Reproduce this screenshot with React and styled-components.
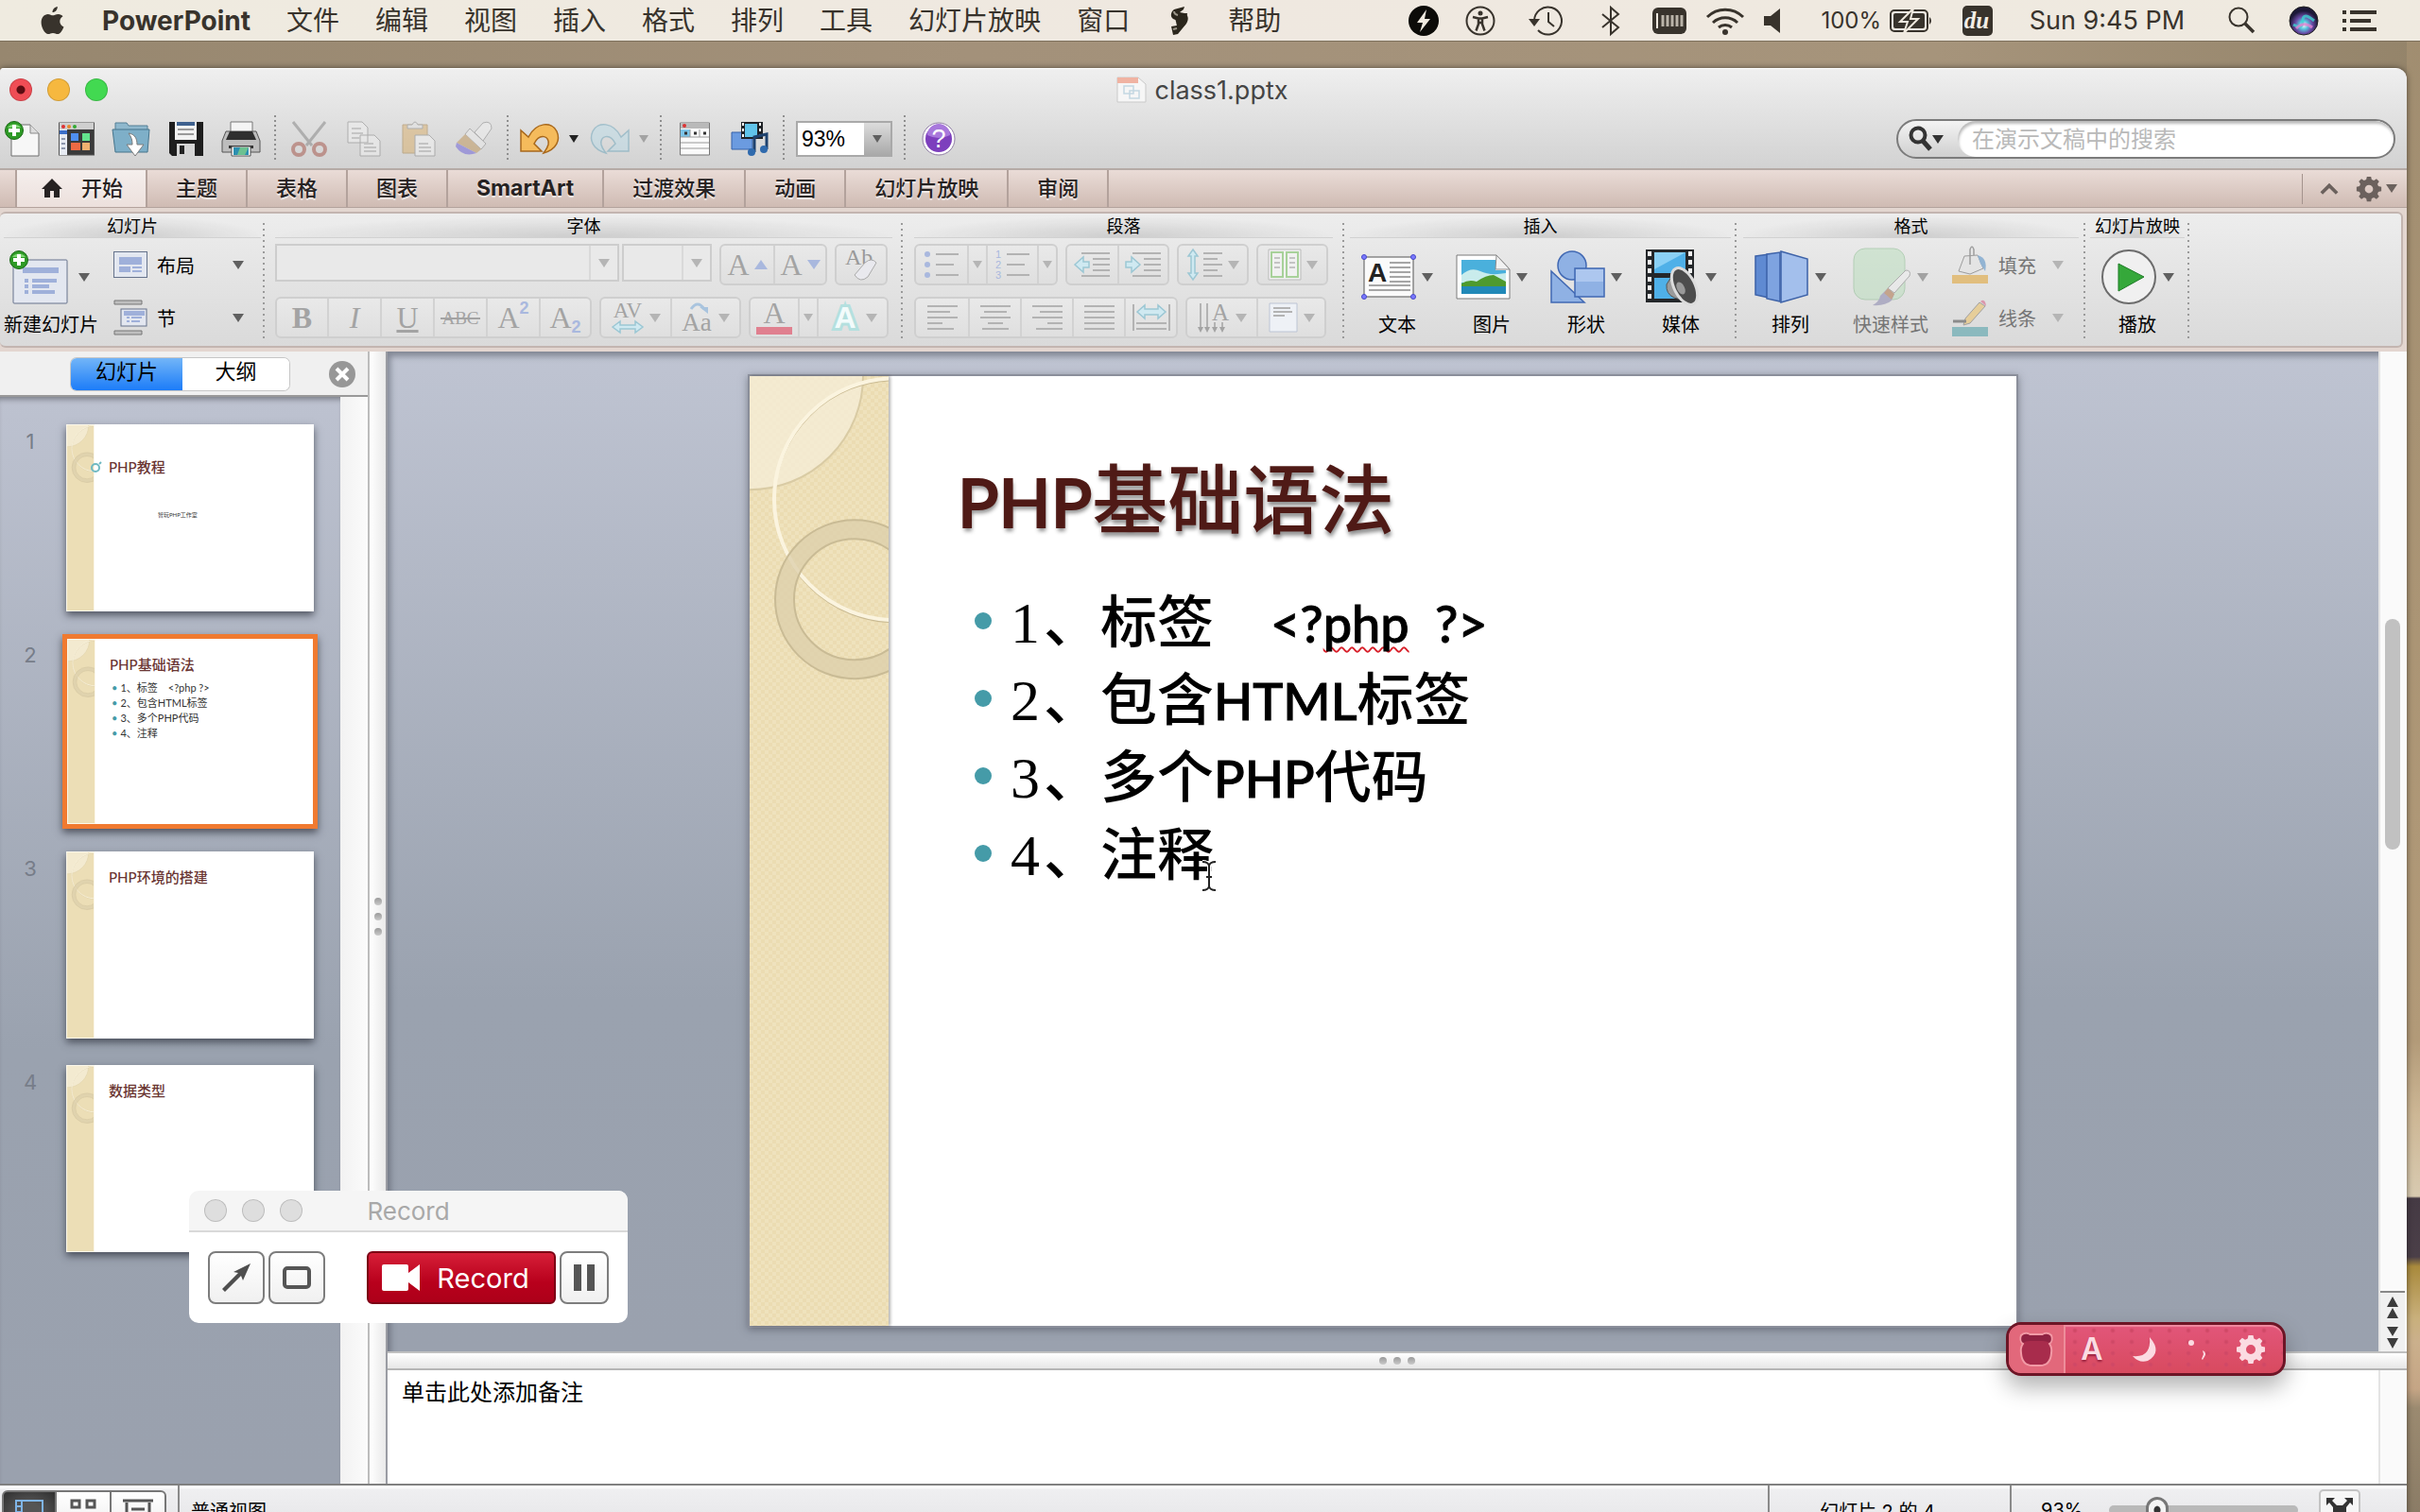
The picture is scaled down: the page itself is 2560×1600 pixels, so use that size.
import React from "react";
import styled, { createGlobalStyle, css } from "styled-components";

const GlobalStyle = createGlobalStyle`
  * {
    box-sizing: border-box;
  }
  body {
    margin: 0;
    font-family: Inter, "Noto Sans CJK SC", sans-serif;
    color: #000;
  }
  button, input, select, textarea {
    font: inherit;
    color: inherit;
    margin: 0;
    padding: 0;
    border: 0;
    background: none;
  }
  svg {
    display: block;
    flex: none;
    overflow: visible;
  }
`

const Desktop = styled.div`
  height: 100vh;
  overflow: hidden;
  position: relative;
  background:
    linear-gradient(#a08d70 0, #b29a78 1100px, #cdb795 1180px, #d8cab0 1266px, #453a44 1268px, #4b3f48 1330px, #a98a3c 1340px, #c9b07c 1395px, #cbb08c 1420px, #c5a585 1470px, #9b8a70 1490px, #8b7c66 1600px) right / 14px 100% no-repeat,
    linear-gradient(90deg, #97876f, #a3917a 40%, #a6947b 80%, #94846a);
`

/* menu bar */

const MenuBar = styled.header`
  height: 44px;
  display: flex;
  align-items: center;
  justify-content: space-between;
  padding: 0 18px 0 42px;
  background: linear-gradient(90deg, #efebe0, #efe8e0 50%, #efeae0);
  border-bottom: 1px solid #7d705c;
  color: #38332c;
  font-size: 27px;
`

const Menus = styled.nav`
  display: flex;
  align-items: center;
  gap: 38px;
`

const MenuButton = styled.button`
  font-size: 28px;
  font-weight: ${props => (props.$app ? 700 : 400)};
  line-height: 40px;
  white-space: nowrap;
`

const Extras = styled.div`
  display: flex;
  align-items: center;
`

const Extra = styled.div`
  width: ${props => props.$w}px;
  display: flex;
  align-items: center;
  justify-content: ${props => (props.$end ? "flex-end" : "center")};
  padding-right: ${props => (props.$end ? 8 : 0)}px;
  font-size: ${props => (props.$end ? 24 : 27)}px;
  white-space: nowrap;
`

/* window */

const Window = styled.main`
  height: calc(100vh - 48px);
  margin: 28px 14px 0 0;
  display: flex;
  flex-direction: column;
  border-radius: 4px 12px 0 0;
  overflow: hidden;
  background: #e3d6d0;
  box-shadow: 0 0 6px rgba(0, 0, 0, 0.5);
`

const Chrome = styled.div`
  height: 108px;
  background: linear-gradient(#efefef, #d2d2d2);
  border-top: 1px solid #fff;
  border-bottom: 2px solid #b5aaa6;
`

const TitleBar = styled.div`
  height: 44px;
  display: grid;
  grid-template-columns: 1fr auto 1fr;
  align-items: center;
  padding: 0 12px 0 10px;
`

const Lights = styled.div`
  display: flex;
  gap: 16px;
`

const Light = styled.button`
  width: 24px;
  height: 24px;
  border-radius: 50%;
  border: 1px solid rgba(0, 0, 0, 0.15);
  background: ${props => props.$c};
`

const FileName = styled.h1`
  margin: 0;
  display: flex;
  align-items: center;
  gap: 8px;
  font-size: 27px;
  font-weight: 400;
  color: #454545;
`

const ToolBar = styled.div`
  height: 60px;
  display: flex;
  align-items: center;
  gap: 12px;
`

const Tool = styled.button`
  width: ${props => (props.$menu ? 62 : 46)}px;
  height: 48px;
  display: flex;
  align-items: center;
  justify-content: ${props => (props.$menu ? "space-between" : "center")};
  opacity: ${props => (props.disabled ? 0.45 : 1)};
`

const Rule = styled.span`
  width: 2px;
  height: 50px;
  background: repeating-linear-gradient(#8f8f8f 0 2px, transparent 2px 5px);
`

const Caret = styled.span`
  flex: none;
  border: ${props => (props.$small ? 5 : 6)}px solid transparent;
  border-top: ${props => (props.$small ? 8 : 9)}px solid ${props => props.$c || "#606060"};
  border-bottom: 0;
`

const Zoom = styled.label`
  width: 102px;
  height: 38px;
  display: flex;
  border: 2px solid #a9a9a9;
  background: #fff;
  font-family: "Liberation Sans", sans-serif;
  font-size: 23px;

  select {
    appearance: none;
    flex: 1;
    min-width: 0;
    padding-left: 4px;
  }
`

const ZoomArrow = styled.span`
  width: 28px;
  display: flex;
  align-items: center;
  justify-content: center;
  background: linear-gradient(#dcdcdc, #a9a9a9);
`

const Search = styled.label`
  margin: 0 12px 0 auto;
  width: 528px;
  height: 42px;
  display: flex;
  align-items: center;
  border: 2px solid #7b7b7b;
  border-radius: 21px;
  background: linear-gradient(#f4f4f4, #cfcfcf);
  overflow: hidden;

  input {
    flex: 1;
    height: 38px;
    padding-left: 15px;
    border-radius: 19px;
    background: #fff;
    box-shadow: inset 1px 3px 3px #bbb;
    font-size: 24px;
  }
  input::placeholder {
    color: #b9b9b9;
  }
`

const SearchGlass = styled.span`
  width: 63px;
  padding-right: 6px;
  display: flex;
  align-items: center;
  justify-content: center;
`

/* tabs */

const Tabs = styled.nav`
  height: 40px;
  display: flex;
  padding-left: 16px;
  background: linear-gradient(#eadcd7, #cfbbb3);
  border-bottom: 1px solid #b3a29c;
`

const Tab = styled.button`
  height: 39px;
  padding: 0 30px 2px;
  display: flex;
  align-items: center;
  gap: 20px;
  border-right: 2px solid #b3a29c;
  font-size: ${props => (props.$bold ? 23 : 22)}px;
  font-weight: ${props => (props.$bold ? 700 : 500)};
  line-height: 34px;
  color: #262222;
  text-shadow: 0 2px 1px rgba(255, 255, 255, 0.7);
  white-space: nowrap;
  ${props => props.$on && css`
    padding: 0 24px 2px 26px;
    border-left: 2px solid #b3a29c;
    background: linear-gradient(#f5efed, #ece0dc);
  `}
`

const TabTools = styled.div`
  margin-left: auto;
  display: flex;
  align-items: center;
  gap: 18px;
  padding-right: 10px;

  &::before {
    content: "";
    width: 1px;
    height: 32px;
    background: #a4938d;
  }
`

const GearMenu = styled.button`
  display: flex;
  align-items: center;
  gap: 4px;
`

/* ribbon */

const Ribbon = styled.section`
  height: 144px;
  margin: 4px 4px 4px 0;
  display: flex;
  border: 2px solid #c3b5b0;
  border-left: 0;
  border-radius: 6px;
  background: linear-gradient(#ededed, #dadada);
`

const Group = styled.section`
  width: ${props => props.$w}px;
  padding: 0 ${props => props.$pad}px;
  display: flex;
  flex-direction: column;
  background: repeating-linear-gradient(#9a9a9a 0 2px, transparent 2px 6px) right 10px / 2px 126px no-repeat;
`

const GroupName = styled.h2`
  margin: 0;
  height: 26px;
  font-size: 18px;
  font-weight: 400;
  line-height: 28px;
  text-align: center;
  white-space: nowrap;
  background: radial-gradient(ellipse 50% 90% at 50% 100%, rgba(0, 0, 0, 0.12), transparent);
  border-bottom: 1px solid rgba(0, 0, 0, 0.1);
`

const GroupBody = styled.div`
  flex: 1;
  padding-top: 6px;
  display: flex;
  flex-direction: ${props => (props.$rows ? "column" : "row")};
  gap: ${props => (props.$rows ? 12 : 0)}px;
`

const Row = styled.div`
  display: flex;
  gap: ${props => props.$gap || 8}px;
`

const Cluster = styled.div`
  display: flex;
  height: 44px;
  border: 2px solid #cfcfcf;
  border-radius: 6px;
  background: linear-gradient(#e9e9e9, #dfdfdf);
`

const Cell = styled.button`
  width: ${props => props.$w}px;
  display: flex;
  align-items: center;
  justify-content: center;
  gap: 5px;
  font-family: "Liberation Serif", serif;
  font-size: 32px;
  line-height: 38px;
  color: #a3a3a3;

  & + & {
    border-left: 2px solid #d2d2d2;
  }
  sup, sub {
    font: 700 18px/20px "Liberation Sans", sans-serif;
    color: #a9b8de;
    margin-left: -5px;
  }
  sup { align-self: flex-start; }
  sub { align-self: flex-end; }
`

const Combo = styled.label`
  width: ${props => props.$w}px;
  height: 40px;
  display: flex;
  align-items: center;
  border: 2px solid #cdcdcd;
  background: #e9e9e9;

  select {
    appearance: none;
    flex: 1;
    min-width: 0;
    height: 36px;
    border-right: 2px solid #d2d2d2;
  }
  ${Caret} {
    margin: 0 8px;
  }
`

const BigButton = styled.button`
  width: ${props => props.$w || 100}px;
  height: 104px;
  font-size: 20px;
  line-height: 34px;
  white-space: nowrap;
  color: ${props => (props.disabled ? "#757575" : "#000")};
`

const BigIcon = styled.span`
  height: 68px;
  display: flex;
  align-items: center;
  justify-content: center;
  gap: 6px;
  opacity: ${props => (props.$faded ? 0.5 : 1)};
`

const SmallStack = styled.div`
  flex: 1;
  display: flex;
  flex-direction: column;
  gap: 12px;
  padding: 0 ${props => props.$right}px 0 ${props => props.$left}px;
`

const SmallButton = styled.button`
  height: 44px;
  width: 100%;
  display: flex;
  align-items: center;
  gap: 10px;
  font-size: 20px;
  color: ${props => (props.disabled ? "#757575" : "#000")};

  svg {
    opacity: ${props => (props.disabled ? 0.6 : 1)};
  }
  ${Caret} {
    margin-left: auto;
  }
`

/* body */

const Body = styled.div`
  flex: 1;
  min-height: 0;
  display: flex;
`

const SidePanel = styled.aside`
  width: 391px;
  display: flex;
  flex-direction: column;
  border-right: 2px solid #bcbcbc;
`

const SideHead = styled.div`
  height: 48px;
  padding: 2px 13px 0 75px;
  display: flex;
  align-items: center;
  justify-content: space-between;
  background: #f0f0f0;
  border-bottom: 2px solid #999;
`

const Segments = styled.div`
  display: flex;
  height: 34px;
  border-radius: 6px;
  overflow: hidden;
  background: #fff;
  box-shadow: 0 0 0 1px #c6c6c6;
`

const Segment = styled.button`
  width: ${props => (props.$on ? 118 : 113)}px;
  padding-bottom: 6px;
  font-size: 22px;
  line-height: 26px;
  background: ${props => (props.$on ? "linear-gradient(#72b5f8, #1c7cf8)" : "#fff")};
`

const SideBody = styled.div`
  flex: 1;
  min-height: 0;
  display: flex;
  background: #fafafa;
`

const Thumbs = styled.ol`
  flex: 1;
  margin: 0;
  padding: 29px 0 0 24px;
  list-style: none;
  background: linear-gradient(#bdc2d0, #9aa2af 60%, #9aa1ae);
  box-shadow: inset 0 6px 6px -4px rgba(0, 0, 0, 0.4);
`

const ThumbItem = styled.li`
  height: 226px;
  display: flex;
  gap: 26px;
  font-size: 22px;
  line-height: 36px;
  color: #777d89;
`

const Number = styled.span`
  width: 16px;
  text-align: center;
`

const Thumb = styled.div`
  width: 270px;
  height: 206px;
  margin-top: -4px;
  display: flex;
  padding: ${props => (props.$on ? 5 : 4)}px;
  ${props => props.$on && css`
    background: #f07a30;
    box-shadow: 0 4px 8px rgba(40, 44, 56, 0.7);
  `}
`

const Paper = styled.div`
  flex: 1;
  display: flex;
  background: #fff;
  box-shadow: ${props => (props.$on ? "none" : "0 4px 8px rgba(40, 44, 56, 0.7)")};
`

const ThumbBand = styled.div`
  width: 30px;
  height: 100%;
  margin-right: 15px;
  border: 1px solid #fbf7ea;
  background: #ecdeb6;
  overflow: hidden;
`

const ThumbText = styled.div`
  padding-top: ${props => (props.$low ? 34 : 16)}px;
  font: 11px/16px Lato, "Noto Sans CJK SC", sans-serif;
  color: #333;

  h3 {
    margin: 0 0 6px;
    font-size: 15px;
    line-height: 22px;
    font-weight: 500;
    color: #6a3532;
    white-space: nowrap;
  }
  h3 svg {
    display: inline;
    margin: 0 7px 0 -19px;
  }
  ul {
    margin: 0;
    padding: 0 0 0 10px;
    list-style: none;
    white-space: pre;
  }
  li::before {
    content: "•";
    margin-left: -8px;
    padding-right: 3px;
    color: #459ba8;
  }
  p {
    margin: 32px 0 0 52px;
    font-size: 6px;
    white-space: nowrap;
  }
`

const SideScroll = styled.div`
  width: 29px;
  background: linear-gradient(90deg, #f2f2f2, #fbfbfb);
`

const VSplit = styled.div`
  width: 19px;
  display: flex;
  flex-direction: column;
  align-items: center;
  gap: 8px;
  padding-top: 578px;
  background: linear-gradient(90deg, #fff, #e9e9e9);
  border-right: 2px solid #9a9ca3;
`

const HSplit = styled.div`
  height: 20px;
  display: flex;
  align-items: center;
  justify-content: center;
  gap: 7px;
  background: linear-gradient(#fff, #e6e6e6);
  border-top: 2px solid #c0c0c0;
  border-bottom: 2px solid #b5b5b5;
`

const Dot = styled.i`
  width: 8px;
  height: 8px;
  border-radius: 50%;
  background: linear-gradient(#9a9a9a, #cacaca);
`

const Editor = styled.div`
  flex: 1;
  display: flex;
  flex-direction: column;
`

const Stage = styled.div`
  flex: 1;
  min-height: 0;
  display: flex;
`

const Canvas = styled.div`
  flex: 1;
  padding: 26px 0 27px;
  display: flex;
  justify-content: center;
  background: linear-gradient(#bfc4d2, #9aa2af 65%, #9aa1ae);
  box-shadow: inset 6px 8px 6px -3px rgba(70, 76, 88, 0.5);
`

const Slide = styled.article`
  height: 100%;
  aspect-ratio: 4 / 3;
  display: flex;
  background: #fff;
  box-shadow: 0 0 0 2px #8b8f9b, 0 2px 8px 2px rgba(60, 64, 76, 0.5);
`

const Band = styled.div`
  width: 147px;
  background: repeating-conic-gradient(#efe2bd 0 25%, #ebdcb2 0 50%) 0 0 / 8px 8px;
  box-shadow: 2px 0 3px rgba(0, 0, 0, 0.3);
  overflow: hidden;
`

const SlideText = styled.div`
  padding: 89px 0 0 73px;
  font-family: Lato, "Noto Sans CJK SC", sans-serif;
  font-size: 60px;
  font-weight: 500;
`

const SlideTitle = styled.h2`
  margin: 0 0 46px;
  font-size: 80px;
  line-height: 80px;
  font-weight: 500;
  color: #4f1a16;
  text-shadow: 1px 4px 4px rgba(0, 0, 0, 0.45);

  span {
    font-size: 72px;
    -webkit-text-stroke: 2px #4f1a16;
  }
`

const Points = styled.ul`
  margin: 0;
  padding: 0 0 0 18px;
  list-style: none;

  li {
    display: flex;
    align-items: baseline;
    height: 82px;
    line-height: 82px;
    white-space: pre;
  }
  li::before {
    content: "";
    align-self: center;
    width: 18px;
    height: 18px;
    margin-right: 20px;
    border-radius: 50%;
    background: #459ba8;
  }
  b {
    font-size: 54px;
    font-weight: 500;
    -webkit-text-stroke: 1px #000;
  }
  u {
    text-decoration: underline wavy #d8202a 2px;
    text-underline-offset: 4px;
    text-decoration-skip-ink: none;
  }
`

const Digit = styled.span`
  width: 35px;
  font-family: "Liberation Serif", serif;
  font-size: 62px;
`

const VScroll = styled.div`
  width: 30px;
  padding-right: 2px;
  display: flex;
  flex-direction: column;
  align-items: center;
  background: #fafafa;
  border-left: 2px solid #e4e4e4;
`

const ScrollThumb = styled.div`
  width: 16px;
  height: 244px;
  margin-top: 283px;
  border-radius: 8px;
  background: #c1c1c1;
`

const Pager = styled.div`
  width: 100%;
  margin-top: auto;
  display: flex;
  flex-direction: column;
  align-items: center;
  background: #f0f0f0;
  border-top: 2px solid #888;

  button {
    height: 31px;
    display: flex;
  }
`

const Notes = styled.div`
  height: 120px;
  display: flex;
  background: #fff;

  textarea {
    flex: 1;
    resize: none;
    padding: 8px 15px;
    font-size: 24px;
    line-height: 32px;
  }
  textarea::placeholder {
    color: #000;
  }
`

/* status bar */

const StatusBar = styled.footer`
  height: 54px;
  display: flex;
  border-top: 2px solid #808080;
  background: linear-gradient(#fff 0 2px, #efeff1 4px, #e4e4e6);
  font-size: 20px;
`

const Views = styled.div`
  width: 190px;
  padding: 5px 0 0 2px;
  display: flex;
  border-right: 2px solid #8a8a8a;
`

const ViewButton = styled.button`
  width: 58px;
  height: 44px;
  display: flex;
  align-items: center;
  justify-content: center;
  border: 2px solid #777;
  border-left-width: ${props => (props.$on ? 2 : 0)}px;
  border-radius: ${props => (props.$on ? "6px 0 0 6px" : props.$last ? "0 6px 6px 0" : "0")};
  background: ${props => (props.$on ? "radial-gradient(#555 30%, #2f2f2f)" : "linear-gradient(#fff, #eee)")};
`

const StatusCell = styled.div`
  width: ${props => props.$w}px;
  flex: ${props => (props.$grow ? "1" : "none")};
  padding-left: ${props => props.$pad}px;
  display: flex;
  align-items: center;
  gap: 28px;
  border-right: ${props => (props.$last ? "0" : "2px solid #8a8a8a")};
  white-space: pre;
`

const Slider = styled.input`
  appearance: none;
  width: 200px;
  height: 10px;
  border-radius: 5px;
  background: #b9b9b9;

  &::-webkit-slider-thumb {
    appearance: none;
    width: 24px;
    height: 28px;
    border: 3px solid #777;
    border-radius: 12px;
    background: radial-gradient(#333 0 3px, #f4f4f4 4px);
  }
`

const FitButton = styled.button`
  width: 44px;
  height: 44px;
  margin-left: -6px;
  display: flex;
  align-items: center;
  justify-content: center;
  border: 2px solid #c4c4c4;
  border-radius: 5px;
  background: #f6f6f6;
`

/* floating windows */

const Recorder = styled.section`
  position: absolute;
  left: 200px;
  top: 1260px;
  width: 464px;
  height: 140px;
  border-radius: 10px;
  overflow: hidden;
  background: #fff;
`

const RecorderTitle = styled.div`
  height: 44px;
  padding: 0 16px;
  display: grid;
  grid-template-columns: 1fr auto 1fr;
  align-items: center;
  background: #f5f5f5;
  border-bottom: 2px solid #d9d9d9;
  font-size: 26px;
  color: #a8a8a8;
`

const RecorderBody = styled.div`
  padding: 20px;
  display: flex;
  gap: 4px;
`

const RecButton = styled.button`
  width: ${props => props.$w || 60}px;
  height: 56px;
  display: flex;
  align-items: center;
  justify-content: center;
  border: 2px solid #7d7d7d;
  border-radius: 8px;
  background: linear-gradient(#fff, #f0f0f0);
  ${props => props.$red && css`
    margin-left: 40px;
    padding-right: 12px;
    gap: 18px;
    border-color: #7c0014;
    border-radius: 6px;
    background: linear-gradient(#d61f38, #b8001c 60%, #ad0019);
    color: #fff;
    font-size: 29px;
  `}
`

const InputBar = styled.section`
  position: absolute;
  left: 2122px;
  top: 1399px;
  width: 296px;
  height: 57px;
  padding-right: 6px;
  display: flex;
  align-items: center;
  border: 3px solid #6d1526;
  border-radius: 16px;
  background: radial-gradient(circle, #cf4866 1px, transparent 3px) 0 0 / 20px 12px, linear-gradient(#e2567a, #d84a5f);
  box-shadow: inset 0 2px 1px #f18aa0, 0 12px 24px rgba(0, 0, 0, 0.3);
  overflow: hidden;
  color: #fbdbe2;

  button {
    flex: 1;
    height: 100%;
    display: flex;
    align-items: center;
    justify-content: center;
    font-size: 32px;
    font-weight: 600;
    text-shadow: 0 2px 2px #9a2440;
  }
  button:first-child {
    flex: none;
    width: 60px;
    background: #e2687b;
    border-right: 2px solid #ee8d9a;
  }
`

const TextCursor = styled.div`
  position: absolute;
  left: 1270px;
  top: 910px;
`

/* icons */

const Plus = ({ x, y }) => (
  <g transform={`translate(${x} ${y})`}>
    <circle r="9.5" fill="#2e9a26" stroke="#1b6a17" />
    <path d="M-7 -3a8 7 0 0 1 14 0z" fill="#7fd673" />
    <path d="M0-6V6M-6 0H6" stroke="#fff" strokeWidth="4" />
  </g>
)

const Lines = ({ rows, w = 36, h = 32, children }) => (
  <svg width={w} height={h} viewBox={`0 0 ${w} ${h}`} fill="none">
    {rows.map(([x1, x2], i) => (
      <path key={i} d={`M${x1} ${4 + i * 6}H${x2}`} stroke="#b3b3b3" strokeWidth="2" />
    ))}
    {children}
  </svg>
)

const Arrow = ({ d }) => <path d={d} fill="#cfe9f1" stroke="#9cc7d4" strokeWidth="1.5" />

const AppleIcon = () => (
  <svg width="28" height="32" viewBox="0 0 28 32" fill="#38332c">
    <path d="M18.8 1c.2 3-2.3 6.200-5.300 6.100C13.200 4.300 16 1.300 18.800 1zM24.500 11.200c-4.800 3-3.900 9.300 1 11.200-1.400 3.600-4 7.600-6.500 7.700-2 0-2.700-1.200-5-1.200s-3.100 1.200-5 1.200C5.300 30.100 1.500 23 1.600 17.600c.1-5.500 3.500-8.600 7-8.700 2.200 0 4 1.400 5.300 1.400s3.500-1.600 6-1.400c1.800.1 3.500.8 4.600 2.300z" />
  </svg>
)

const ScriptIcon = () => (
  <svg width="28" height="32" viewBox="0 0 28 32">
    <path d="M20 1L9 4C5 7 5 12 8 14l7 3-3 4-6 1 2 9 5-1 9-11c3-5 2-9-2-11l-5-1 4-3z" fill="#2b261c" />
    <path d="M9 8h14l-2 12-8 6z" fill="#2b261c" />
    <path d="M9 6q0 3 4 4M8 25l4-1" stroke="#9a9488" strokeWidth="2" fill="none" />
  </svg>
)

const extras = {
  bolt: (
    <svg width="32" height="32" viewBox="0 0 32 32">
      <circle cx="16" cy="16" r="16" fill="#0c0b08" />
      <path d="M19 4L9 18h6l-3 10 11-14h-6z" fill="#efe9df" />
    </svg>
  ),
  access: (
    <svg width="32" height="32" viewBox="0 0 32 32" fill="none" stroke="#38332c" strokeWidth="2">
      <circle cx="16" cy="16" r="14.500" />
      <circle cx="16" cy="8" r="2.500" fill="#38332c" stroke="none" />
      <path d="M8 12l6 1.500h4l6-1.500M14 13.500v6l-2.500 7M18 13.500v6l2.500 7M15 18h2" strokeWidth="2.500" />
    </svg>
  ),
  clock: (
    <svg width="38" height="32" viewBox="0 0 38 32" fill="none" stroke="#38332c" strokeWidth="2">
      <path d="M7 16A14.500 14.500 0 1 1 11 26" />
      <path d="M22 7v10l6 5" />
      <path d="M1 14h12l-6 8z" fill="#38332c" stroke="none" />
    </svg>
  ),
  bluetooth: (
    <svg width="22" height="32" viewBox="0 0 22 32" fill="none" stroke="#38332c" strokeWidth="2">
      <path d="M2 9l17 14-8 7V2l8 7L2 23" />
    </svg>
  ),
  memory: (
    <svg width="36" height="28" viewBox="0 0 36 28">
      <rect width="36" height="28" rx="6" fill="#38332c" />
      <path d="M5 6v16" stroke="#efe9df" strokeWidth="2" />
      <path d="M11 8v12M16 8v12M21 8v12M26 8v12M31 8v12" stroke="#b9b3a8" strokeWidth="3" />
    </svg>
  ),
  wifi: (
    <svg width="42" height="30" viewBox="0 0 42 30" fill="none" stroke="#38332c" strokeWidth="3">
      <path d="M2 11a27 27 0 0 1 38 0M8 17a19 19 0 0 1 26 0M14 22a11 11 0 0 1 14 0" />
      <circle cx="21" cy="27" r="3" fill="#38332c" stroke="none" />
    </svg>
  ),
  speaker: (
    <svg width="18" height="26" viewBox="0 0 18 26" fill="#38332c">
      <path d="M0 8h7l10-8v26L7 18H0z" />
    </svg>
  ),
  battery: (
    <svg width="46" height="26" viewBox="0 0 46 26">
      <rect x="1" y="2" width="39" height="22" rx="4" fill="none" stroke="#38332c" strokeWidth="2" />
      <rect x="4" y="5" width="33" height="16" rx="2" fill="#38332c" />
      <path d="M42 9a5 5 0 0 1 0 8z" fill="#38332c" />
      <path d="M25 0L11 14h8l-4 12 15-15h-8z" fill="#38332c" stroke="#efe9df" strokeWidth="2" />
    </svg>
  ),
  search: (
    <svg width="32" height="32" viewBox="0 0 32 32" fill="none" stroke="#38332c">
      <circle cx="12" cy="12" r="9.500" strokeWidth="2" />
      <path d="M19 19l9 9" strokeWidth="3.500" />
    </svg>
  ),
  list: (
    <svg width="36" height="24" viewBox="0 0 36 24" stroke="#38332c" strokeWidth="4">
      <path d="M0 3h4M8 3h28M0 12h4M8 12h22M0 21h4M8 21h28" />
    </svg>
  ),
}

const SiriIcon = () => (
  <svg width="32" height="32" viewBox="0 0 32 32">
    <defs>
      <radialGradient id="siri" cx="50%" cy="65%">
        <stop offset="0" stopColor="#fff" />
        <stop offset="0.3" stopColor="#59c4dd" />
        <stop offset="0.6" stopColor="#6a4aa5" />
        <stop offset="1" stopColor="#1c1838" />
      </radialGradient>
    </defs>
    <circle cx="16" cy="16" r="15" fill="url(#siri)" stroke="#222" />
    <path d="M5 20q10 6 10-4t12 0" stroke="#3cd2d2" strokeWidth="3" fill="none" opacity="0.8" />
    <path d="M8 24q8-8 17-1" stroke="#e37fd0" strokeWidth="3" fill="none" opacity="0.8" />
  </svg>
)

const DuIcon = () => (
  <svg width="32" height="32" viewBox="0 0 32 32">
    <rect width="32" height="32" rx="5" fill="#38332c" />
    <text x="15" y="24" textAnchor="middle" fontFamily="Liberation Serif" fontStyle="italic" fontWeight="700" fontSize="25" fill="#f3eee6">du</text>
  </svg>
)

const FileIcon = () => (
  <svg width="32" height="28" viewBox="0 0 32 28">
    <path d="M1 1h22l8 7v19H1z" fill="#f6f6f6" stroke="#c9c9c9" />
    <path d="M1 1h22v6H1z" fill="#f0b3a2" />
    <path d="M8 10h10v8H8zM14 15h10v8H14z" fill="none" stroke="#c3d7e2" strokeWidth="1.5" />
  </svg>
)

const toolIcons = {
  newFile: (
    <svg width="38" height="40" viewBox="0 0 38 40">
      <path d="M8 5h20l9 9v24H8z" fill="#f7f7f7" stroke="#6f6f6f" />
      <path d="M28 5v9h9" fill="#ddd" stroke="#8a8a8a" />
      <Plus x="11" y="11" />
    </svg>
  ),
  gallery: (
    <svg width="38" height="36" viewBox="0 0 38 36">
      <rect x="0.500" y="1" width="37" height="34" fill="#3b3b3b" stroke="#555" />
      <rect x="1" y="1" width="36" height="7" fill="#cfcfcf" />
      <circle cx="5" cy="5" r="2" fill="#d33" /><circle cx="11" cy="5" r="2" fill="#e88a2c" /><circle cx="17" cy="5" r="2" fill="#3a3" />
      <path d="M1 8h8v27H1z" fill="#e7ebf3" /><path d="M1 9h8v4H1z" fill="#3b6fc9" />
      <path d="M3 18h4M3 23h4M3 28h4" stroke="#8b96ad" strokeWidth="2" />
      <path d="M13 12h8v8h-8z" fill="#4f8ff0" /><path d="M25 12h8v8h-8z" fill="#63e38d" />
      <path d="M13 22h10v8H13z" fill="#ee6a44" /><path d="M25 22h8v8h-8z" fill="#efb070" />
    </svg>
  ),
  open: (
    <svg width="42" height="38" viewBox="0 0 42 38">
      <path d="M4 6V2h12l2 3h20v6H4z" fill="#8fb8cd" stroke="#557f95" />
      <path d="M1 9h39l-2 24H4z" fill="#7eafc8" stroke="#47748b" />
      <path d="M18 13c7 1 9 6 9 12h7l-9 12-9-12h6c0-5-1-8-4-12z" fill="#fff" stroke="#7b7b7b" />
    </svg>
  ),
  save: (
    <svg width="38" height="38" viewBox="0 0 38 38">
      <path d="M1 1h36v36H4l-3-3z" fill="#1e1e1e" />
      <path d="M7 1h23v19H7z" fill="#f2f2f2" /><path d="M9 1h19v4H9z" fill="#3f628f" />
      <path d="M10 9h17M10 14h17" stroke="#9a9a9a" strokeWidth="2" />
      <path d="M9 24h19v13H9z" fill="#d5d5d5" /><path d="M12 26h5v9h-5z" fill="#222" />
    </svg>
  ),
  print: (
    <svg width="42" height="38" viewBox="0 0 42 38">
      <path d="M10 1h23v12H10z" fill="#f4f4f4" stroke="#777" />
      <path d="M5 11h32l4 10v12H1V21z" fill="#bdbdbd" stroke="#555" />
      <path d="M9 11h24l4 9H5z" fill="#2f2f2f" />
      <path d="M8 26h26v3H8z" fill="#333" />
      <path d="M11 27h20v10H11z" fill="#fff" stroke="#555" /><path d="M13 28h16v8H13z" fill="#2d8fb0" /><path d="M20 28h9l-4 8h-8z" fill="#6cc191" />
    </svg>
  ),
  cut: (
    <svg width="38" height="38" viewBox="0 0 38 38" fill="none">
      <path d="M2 1l20 25M36 1L16 26" stroke="#777" strokeWidth="3" />
      <circle cx="8" cy="30" r="6" stroke="#9c4033" strokeWidth="4" /><circle cx="30" cy="30" r="6" stroke="#9c4033" strokeWidth="4" />
    </svg>
  ),
  copy: (
    <svg width="36" height="38" viewBox="0 0 36 38" fill="#f4f4f4" stroke="#777">
      <path d="M1 1h15l6 6v16H1zM14 15h15l6 6v16H14z" />
      <path d="M5 8h10M5 13h12M5 18h9M18 24h10M18 28h13M18 32h13" stroke="#aaa" strokeWidth="2" />
    </svg>
  ),
  paste: (
    <svg width="36" height="38" viewBox="0 0 36 38" stroke="#777">
      <path d="M1 4h26v30H1z" fill="#d9a95c" stroke="#9c7433" />
      <path d="M6 8V4h5q3-6 6 0h5v4z" fill="#e3e3e3" />
      <path d="M14 15h15l6 6v16H14z" fill="#f7f7f7" />
      <path d="M18 24h10M18 28h13M18 32h13" stroke="#aaa" strokeWidth="2" />
    </svg>
  ),
  brush: (
    <svg width="42" height="38" viewBox="0 0 42 38">
      <path d="M22 12L31 2q9-3 9 6l-9 13z" fill="#f2f2f2" stroke="#777" />
      <path d="M17 8l17 16-5 6L12 14z" fill="#eee" stroke="#777" />
      <path d="M12 14l17 16-5 4L3 23z" fill="#b98a46" />
      <path d="M3 23l21 11q-14 5-22-7z" fill="#5c4fd8" />
    </svg>
  ),
  undo: (
    <svg width="42" height="34" viewBox="0 0 42 34">
      <path d="M1 8v22h22l-8-8c6-12 17-8 15 1-1 4-3 6-5 9 14-4 18-14 14-23C34-2 17-1 9 15z" fill="#f5bb5c" stroke="#a8681c" strokeWidth="1.500" />
    </svg>
  ),
  redo: (
    <svg width="42" height="34" viewBox="0 0 42 34">
      <path d="M41 8v22H19l8-8c-6-12-17-8-15 1 1 4 3 6 5 9C3 28-1 18 3 9 8-2 25-1 33 15z" fill="#b7dbe9" stroke="#5b9cb5" strokeWidth="1.500" />
    </svg>
  ),
  palette: (
    <svg width="32" height="36" viewBox="0 0 32 36">
      <path d="M.5 1h31v34H.5z" fill="#fafafa" stroke="#777" />
      <path d="M1 1h30v6H1z" fill="#b9b9b9" /><circle cx="5" cy="4" r="2" fill="#d33" />
      <path d="M1 8h10v8H1z" fill="#7cc4e8" />
      <path d="M11 8v8M21 8v8M1 16h30M1 22h30M1 28h30" stroke="#9a9a9a" />
      <path d="M15 12h3M25 12h3M5 12h3" stroke="#333" strokeWidth="3" />
    </svg>
  ),
  media: (
    <svg width="40" height="36" viewBox="0 0 40 36">
      <path d="M1 11h22v18H1z" fill="#6b9be0" stroke="#3461a8" />
      <path d="M11 0h23v18H11z" fill="#1f2226" /><path d="M15 2h13v14H15z" fill="#61c4ea" />
      <path d="M13 1v17M31 1v17" stroke="#fff" strokeWidth="2" strokeDasharray="3 3" />
      <path d="M25 32V16l13-3v16" fill="none" stroke="#1e426e" strokeWidth="3" />
      <circle cx="22" cy="32" r="4" fill="#2f6aad" /><circle cx="35" cy="29" r="4" fill="#2f6aad" />
    </svg>
  ),
  help: (
    <svg width="38" height="38" viewBox="0 0 38 38">
      <circle cx="19" cy="19" r="17" fill="#fff" stroke="#8e7ca3" />
      <circle cx="19" cy="19" r="14" fill="#7d3fbd" />
      <path d="M7 15a12 12 0 0 1 24 0q-12 6-24 0z" fill="#a878dc" />
      <text x="19" y="28" textAnchor="middle" fontFamily="Liberation Sans" fontSize="27" fill="#fff">?</text>
    </svg>
  ),
}

const HomeIcon = () => (
  <svg width="22" height="20" viewBox="0 0 22 20" fill="#262222">
    <path d="M11 0l11 11h-3v9h-6v-7H9v7H3v-9H0z" />
  </svg>
)

const gearPath = "M10.500 0h5l.8 3.600 2.700 1.100 3.100-2 3.200 3.200-2 3.100 1.100 2.700 3.600.8v5l-3.600.8-1.100 2.700 2 3.100-3.200 3.200-3.100-2-2.700 1.100-.8 3.600h-5l-.8-3.600-2.700-1.100-3.100 2L.7 24.100l2-3.100-1.100-2.700-3.600-.8v-5l3.600-.8L2.700 9l-2-3.100L3.900 2.700l3.100 2 2.700-1.100zM13 10a5 5 0 1 0 0 10 5 5 0 0 0 0-10z"

const Gear = ({ size, color }) => (
  <svg width={size} height={size} viewBox="-3 -1 32 32" fill={color} fillRule="evenodd">
    <path d={gearPath} />
  </svg>
)

const NewSlideIcon = () => (
  <svg width="66" height="58" viewBox="2 0 66 58">
    <rect x="5" y="11" width="57" height="46" rx="1" fill="#e3e7f0" stroke="#66738c" />
    <path d="M15 19h38v6H15zM17 31h4v4h-4zM25 31h26v4H25zM17 37h4v4h-4zM25 37h18v4H25zM17 43h4v4h-4zM25 43h24v4H25z" fill="#9fb0da" />
    <Plus x="11" y="11" />
  </svg>
)

const LayoutIcon = () => (
  <svg width="36" height="28" viewBox="0 0 36 28">
    <rect x="0.500" y="0.500" width="35" height="27" fill="#e3e7f0" stroke="#66738c" />
    <path d="M6 6h24v8H6zM6 16h12v6H6zM20 16h10v2H20zM20 20h10v2H20z" fill="#9fb0da" />
  </svg>
)

const SectionIcon = () => (
  <svg width="36" height="38" viewBox="0 0 36 38">
    <path d="M1 1h29v4H1zM1 33h29v4H1z" fill="#bfbfbf" stroke="#777" />
    <rect x="8" y="10" width="27" height="18" fill="#e3e7f0" stroke="#66738c" />
    <path d="M12 13h20v3H12zM14 19h3M19 19h11M14 23h3M19 23h9" fill="#9fb0da" stroke="#9fb0da" strokeWidth="2" />
  </svg>
)

const TextBoxIcon = () => (
  <svg width="58" height="48" viewBox="0 0 58 48">
    <rect x="3" y="3" width="52" height="42" fill="#fafafa" stroke="#555" />
    <text x="7" y="29" fontFamily="Liberation Sans" fontWeight="700" fontSize="28" fill="#222">A</text>
    <path d="M30 9h22M30 14h22M30 19h22M30 24h22M30 29h22M8 33h44M8 38h44" stroke="#8a8a8a" strokeWidth="1.500" />
    <g fill="#7a7aff" stroke="#4848c8"><circle cx="3" cy="3" r="2.500" /><circle cx="55" cy="3" r="2.500" /><circle cx="3" cy="45" r="2.500" /><circle cx="55" cy="45" r="2.500" /></g>
  </svg>
)

const PictureIcon = () => (
  <svg width="58" height="48" viewBox="0 0 58 48">
    <path d="M1 1h42l14 15v31H1z" fill="#fff" stroke="#7b7b7b" />
    <path d="M6 6h36v11h11v25H6z" fill="#4ab0dc" />
    <path d="M6 22q10-9 20-4t27 2v10H6z" fill="#c9ecec" />
    <path d="M6 31q8-5 16-2 10-7 18-7l13 7v6H6z" fill="#4e9a2e" />
    <path d="M6 34h47v8H6z" fill="#2189b8" />
    <path d="M43 1l-1 15h15z" fill="#f2f2f2" stroke="#8a8a8a" />
  </svg>
)

const ShapesIcon = () => (
  <svg width="58" height="58" viewBox="0 0 58 58" fill="#8fb1e4" stroke="#4068b3" strokeWidth="1.500">
    <circle cx="23" cy="17" r="15" />
    <path d="M1 23v33h35z" />
    <rect x="26" y="20" width="31" height="30" />
    <path d="M27 21h29v13H27z" fill="#adc7ef" stroke="none" />
  </svg>
)

const MediaIcon = () => (
  <svg width="58" height="60" viewBox="0 0 58 60">
    <path d="M1 1h51v56H1z" fill="#24272a" />
    <path d="M10 4h33v22H10zM10 31h33v22H10z" fill="#4fb0e8" />
    <path d="M10 4h33L10 22z" fill="#8ad0f5" />
    <path d="M5 3v54M48 3v54" stroke="#f2f2f2" strokeWidth="4" strokeDasharray="5 4" />
    <path d="M23 38l10-16 12 34-14-4q-9-4-8-14z" fill="#9a9a9a" stroke="#555" />
    <ellipse cx="42" cy="40" rx="11" ry="21" transform="rotate(-27 42 40)" fill="#4c4c4c" stroke="#dcdcdc" strokeWidth="3" />
    <ellipse cx="38" cy="42" rx="4" ry="7" transform="rotate(-27 38 42)" fill="#999" />
  </svg>
)

const ArrangeIcon = () => (
  <svg width="58" height="56" viewBox="0 0 58 56" stroke="#3d62a8" strokeWidth="1.500">
    <path d="M1 6l14-2v46L1 47z" fill="#5f8ad2" />
    <path d="M13 4l14-2v52l-14-3z" fill="#7ea3e0" />
    <path d="M28 1l28 8v38l-28 8z" fill="#a3bfec" />
  </svg>
)

const StyleIcon = () => (
  <svg width="62" height="62" viewBox="0 0 62 62">
    <rect x="1" y="1" width="54" height="54" rx="12" fill="#b9dfbc" stroke="#83b888" />
    <path d="M56 24q6 0 4 6L44 48l-7-5z" fill="#eee" stroke="#777" />
    <path d="M37 43l7 6-3 7q-7 6-20 5 7-4 8-10z" fill="#7e7ba8" />
    <path d="M37 43l7 6-3 6-8-7z" fill="#a8683a" />
  </svg>
)

const FillIcon = () => (
  <svg width="40" height="40" viewBox="0 0 40 40">
    <path d="M14 11l14-1 6 14-14 6-12-3z" fill="#e4e4e4" stroke="#6c6c6c" />
    <path d="M20 20V4q2-6 4 0v6" fill="none" stroke="#6c6c6c" strokeWidth="1.500" />
    <path d="M28 10q11 3 8 17l-5-8z" fill="#5b93c8" />
    <path d="M1 31h38v9H1z" fill="#e0a63c" />
  </svg>
)

const LineIcon = () => (
  <svg width="40" height="40" viewBox="0 0 40 40">
    <path d="M30 4l6 4-16 18-7 2 2-7z" fill="#ecc36c" stroke="#777" />
    <path d="M31 3q5-4 6 5z" fill="#d9698b" />
    <path d="M2 24h14" stroke="#555" strokeWidth="3" />
    <path d="M1 30h38v10H1z" fill="#57a3ab" />
  </svg>
)

const PlayIcon = () => (
  <svg width="60" height="60" viewBox="0 0 60 60">
    <circle cx="30" cy="30" r="28" fill="#f0f0f0" stroke="#6c6c6c" strokeWidth="2" />
    <path d="M19 16v29l27-15z" fill="#35a83a" stroke="#1e7c26" />
  </svg>
)

const SearchIcon = () => (
  <svg width="26" height="28" viewBox="0 0 26 28" fill="none" stroke="#333">
    <circle cx="11" cy="10" r="7.500" strokeWidth="4" />
    <path d="M16 16l8 9" strokeWidth="5" />
  </svg>
)

const CloseIcon = () => (
  <svg width="28" height="28" viewBox="0 0 28 28">
    <circle cx="14" cy="14" r="14" fill="#979797" />
    <path d="M8 8l12 12M20 8L8 20" stroke="#fff" strokeWidth="4" />
  </svg>
)

const BearIcon = () => (
  <svg width="38" height="36" viewBox="0 0 38 36">
    <path d="M3 3q4-4 9-1h14q5-3 9 1 2 5-2 9 3 4 2 10-1 13-12 13h-8Q4 35 3 22q-1-6 2-10Q1 8 3 3z" fill="#a82c4c" stroke="#f29aa6" strokeWidth="2" />
    <path d="M4 4q4-4 8-1h14q4-3 8 1 2 5-1 7-3-2-7-2H12q-4 0-7 2-3-2-1-7z" fill="#8f2242" />
  </svg>
)

// Corner rings of the theme, also used small on the thumbnails
const Rings = ({ width }) => (
  <svg width={width} height={width * 2.300} viewBox="0 0 148 340" fill="none">
    <circle cx="0" cy="0" r="120" fill="#f6eed8" fillOpacity="0.75" stroke="#d9cba4" strokeWidth="2" />
    <circle cx="154" cy="132" r="128" stroke="#c9ba92" strokeWidth="2" />
    <circle cx="154" cy="130" r="128" stroke="#fbf4df" strokeWidth="4" />
    <circle cx="111" cy="236" r="74" stroke="#dccfab" strokeOpacity="0.75" strokeWidth="19" />
    <circle cx="111" cy="236" r="84" stroke="#c9bb95" strokeWidth="2" />
    <circle cx="111" cy="236" r="64" stroke="#c9bb95" strokeWidth="2" />
  </svg>
)

const DoubleArrow = ({ down }) => (
  <svg width="12" height="31" viewBox="0 0 12 31" fill="#3c3c3c">
    {down ? <path d="M0 5h12L6 15zM0 17h12L6 28z" /> : <path d="M0 15h12L6 4zM0 27h12L6 16z" />}
  </svg>
)

const light = "#b5b5b5"
const tabs = ["主题", "表格", "图表", "SmartArt", "过渡效果", "动画", "幻灯片放映", "审阅"]
const menus = ["文件", "编辑", "视图", "插入", "格式", "排列", "工具", "幻灯片放映", "窗口"]

const BigItem = ({ icon, label, w, disabled }) => (
  <BigButton $w={w} disabled={disabled}>
    <BigIcon $faded={disabled}>{icon}<Caret /></BigIcon>
    {label}
  </BigButton>
)

const ThumbSlide = ({ n, on, low, title, children }) => (
  <ThumbItem>
    <Number>{n}</Number>
    <Thumb $on={on}>
      <Paper $on={on}>
        <ThumbBand><Rings width={28} /></ThumbBand>
        <ThumbText $low={low}>
          <h3>
            {low && (
              <svg width="12" height="12" viewBox="0 0 12 12" fill="none" stroke="#6fb9c2" strokeWidth="2">
                <circle cx="5" cy="7" r="4" /><path d="M9 3l2-2" />
              </svg>
            )}
            {title}
          </h3>
          {children}
        </ThumbText>
      </Paper>
    </Thumb>
  </ThumbItem>
)

const TopBar = () => (
  <MenuBar>
    <Menus>
      <MenuButton aria-label="Apple"><AppleIcon /></MenuButton>
      <MenuButton $app>PowerPoint</MenuButton>
      {menus.map(name => <MenuButton key={name}>{name}</MenuButton>)}
      <MenuButton aria-label="脚本"><ScriptIcon /></MenuButton>
      <MenuButton>帮助</MenuButton>
    </Menus>
    <Extras>
      <Extra $w={60}>{extras.bolt}</Extra>
      <Extra $w={60}>{extras.access}</Extra>
      <Extra $w={78}>{extras.clock}</Extra>
      <Extra $w={60}>{extras.bluetooth}</Extra>
      <Extra $w={64}>{extras.memory}</Extra>
      <Extra $w={54}>{extras.wifi}</Extra>
      <Extra $w={46}>{extras.speaker}</Extra>
      <Extra $w={100} $end>100%</Extra>
      <Extra $w={48}>{extras.battery}</Extra>
      <Extra $w={92}><DuIcon /></Extra>
      <Extra $w={182}>Sun 9:45 PM</Extra>
      <Extra $w={104}>{extras.search}</Extra>
      <Extra $w={26}><SiriIcon /></Extra>
      <Extra $w={92}>{extras.list}</Extra>
    </Extras>
  </MenuBar>
)

const MainToolBar = () => (
  <ToolBar>
    <Tool aria-label="新建">{toolIcons.newFile}</Tool>
    <Tool aria-label="模板">{toolIcons.gallery}</Tool>
    <Tool aria-label="打开">{toolIcons.open}</Tool>
    <Tool aria-label="保存">{toolIcons.save}</Tool>
    <Tool aria-label="打印">{toolIcons.print}</Tool>
    <Rule />
    <Tool aria-label="剪切" disabled>{toolIcons.cut}</Tool>
    <Tool aria-label="复制" disabled>{toolIcons.copy}</Tool>
    <Tool aria-label="粘贴" disabled>{toolIcons.paste}</Tool>
    <Tool aria-label="格式刷" disabled>{toolIcons.brush}</Tool>
    <Rule />
    <Tool aria-label="撤销" $menu>{toolIcons.undo}<Caret $small $c="#222" /></Tool>
    <Tool aria-label="重做" $menu disabled>{toolIcons.redo}<Caret $small /></Tool>
    <Rule />
    <Tool aria-label="工具箱">{toolIcons.palette}</Tool>
    <Tool aria-label="媒体浏览器">{toolIcons.media}</Tool>
    <Rule />
    <Zoom>
      <select aria-label="缩放" defaultValue="93%"><option>93%</option></select>
      <ZoomArrow><Caret $small /></ZoomArrow>
    </Zoom>
    <Rule />
    <Tool aria-label="帮助">{toolIcons.help}</Tool>
    <Search>
      <SearchGlass><SearchIcon /><Caret $c="#333" /></SearchGlass>
      <input aria-label="搜索" placeholder="在演示文稿中的搜索" />
    </Search>
  </ToolBar>
)

const FontGroup = () => (
  <Group $w={675} $pad={11}>
    <GroupName>字体</GroupName>
    <GroupBody $rows>
      <Row>
        <Row $gap={3}>
          <Combo $w={364}><select aria-label="字体" disabled /><Caret $c={light} /></Combo>
          <Combo $w={95}><select aria-label="字号" disabled /><Caret $c={light} /></Combo>
        </Row>
        <Cluster>
          <Cell $w={55} disabled>A<svg width="14" height="10"><path d="M0 10h14L7 0z" fill="#a9b8de" /></svg></Cell>
          <Cell $w={55} disabled>A<svg width="14" height="10"><path d="M0 0h14L7 10z" fill="#a9b8de" /></svg></Cell>
        </Cluster>
        <Cluster>
          <Cell $w={52} disabled aria-label="清除格式">
            <svg width="42" height="40" viewBox="0 0 42 40">
              <text x="4" y="20" fontFamily="Liberation Serif" fontSize="24" fill="#999">Ab</text>
              <path d="M25 18q7-6 12 0l-9 15q-8 7-14-2z" fill="#e9e9ee" stroke="#aaa" />
            </svg>
          </Cell>
        </Cluster>
      </Row>
      <Row>
        <Cluster>
          <Cell $w={53} disabled><b>B</b></Cell>
          <Cell $w={56} disabled><i>I</i></Cell>
          <Cell $w={56} disabled><u>U</u></Cell>
          <Cell $w={56} disabled aria-label="删除线">
            <svg width="44" height="30" viewBox="0 0 44 30">
              <text x="22" y="22" textAnchor="middle" fontFamily="Liberation Serif" fontSize="19" fill="#a3a3a3">ABC</text>
              <path d="M1 16h42" stroke="#a3a3a3" strokeWidth="2" />
            </svg>
          </Cell>
          <Cell $w={56} disabled>A<sup>2</sup></Cell>
          <Cell $w={54} disabled>A<sub>2</sub></Cell>
        </Cluster>
        <Cluster>
          <Cell $w={73} disabled aria-label="字符间距">
            <svg width="36" height="38" viewBox="0 0 36 38">
              <text x="18" y="19" textAnchor="middle" fontFamily="Liberation Serif" fontSize="23" fill="#a3a3a3">AV</text>
              <Arrow d="M2 29l8-6v4h16v-4l8 6-8 6v-4H10v4z" />
            </svg>
            <Caret $c={light} />
          </Cell>
          <Cell $w={73} disabled aria-label="更改大小写">
            <svg width="34" height="38" viewBox="0 0 34 38">
              <text x="16" y="33" textAnchor="middle" fontFamily="Liberation Serif" fontSize="27" fill="#a3a3a3">Aa</text>
              <path d="M10 10q7-10 14 0" fill="none" stroke="#a9c4de" strokeWidth="3" />
              <path d="M19 8h9v7z" fill="#a9c4de" />
            </svg>
            <Caret $c={light} />
          </Cell>
        </Cluster>
        <Cluster>
          <Cell $w={50} disabled aria-label="字体颜色">
            <svg width="38" height="38" viewBox="0 0 38 38">
              <text x="19" y="25" textAnchor="middle" fontFamily="Liberation Serif" fontSize="32" fill="#a3a3a3">A</text>
              <path d="M0 29h38v8H0z" fill="#e0808f" />
            </svg>
          </Cell>
          <Cell $w={20} disabled aria-label="颜色"><Caret $small $c={light} /></Cell>
          <Cell $w={74} disabled aria-label="文字效果">
            <svg width="34" height="38" viewBox="0 0 34 38">
              <text x="17" y="30" textAnchor="middle" fontFamily="Liberation Sans" fontWeight="700" fontSize="32" fill="#f2fbfb" stroke="#b4e0df" strokeWidth="6" paintOrder="stroke">A</text>
            </svg>
            <Caret $c={light} />
          </Cell>
        </Cluster>
      </Row>
    </GroupBody>
  </Group>
)

const ParagraphGroup = () => (
  <Group $w={467} $pad={12}>
    <GroupName>段落</GroupName>
    <GroupBody $rows>
      <Row>
        <Cluster>
          <Cell $w={54} disabled aria-label="项目符号">
            <svg width="38" height="32" viewBox="0 0 38 32" stroke="#b3b3b3" strokeWidth="2">
              <path d="M13 5h24M13 16h19M13 27h24" />
              <g fill="#a9b8de" stroke="none"><circle cx="4" cy="5" r="3" /><circle cx="4" cy="16" r="3" /><circle cx="4" cy="27" r="3" /></g>
            </svg>
          </Cell>
          <Cell $w={20} disabled aria-label="符号样式"><Caret $small $c={light} /></Cell>
          <Cell $w={54} disabled aria-label="编号">
            <svg width="38" height="36" viewBox="0 0 38 36">
              <path d="M13 7h24M13 18h19M13 29h24" stroke="#b3b3b3" strokeWidth="2" />
              <g fontFamily="Liberation Sans" fontSize="11" fill="#a9b8de"><text x="1" y="11">1</text><text x="1" y="22">2</text><text x="1" y="33">3</text></g>
            </svg>
          </Cell>
          <Cell $w={20} disabled aria-label="编号样式"><Caret $small $c={light} /></Cell>
        </Cluster>
        <Cluster>
          <Cell $w={53} disabled aria-label="减少缩进">
            <Lines w={40} rows={[[8, 38], [20, 38], [20, 38], [20, 38], [8, 38]]}><Arrow d="M1 16l9-8v5h6v6h-6v5z" /></Lines>
          </Cell>
          <Cell $w={53} disabled aria-label="增加缩进">
            <Lines w={40} rows={[[8, 38], [20, 38], [20, 38], [20, 38], [8, 38]]}><Arrow d="M16 16l-9-8v5H1v6h6v5z" /></Lines>
          </Cell>
        </Cluster>
        <Cluster>
          <Cell $w={72} disabled aria-label="行距">
            <Lines w={38} rows={[[17, 37], [17, 32], [17, 37], [17, 32], [17, 37]]}><Arrow d="M6 0l5 7H8v18h3l-5 7-5-7h3V7H1z" /></Lines>
            <Caret $c={light} />
          </Cell>
        </Cluster>
        <Cluster>
          <Cell $w={72} disabled aria-label="分栏">
            <svg width="36" height="34" viewBox="0 0 36 34">
              <path d="M1 1h34v32H1z" fill="#f1f1f1" stroke="#bbb" />
              <path d="M4 4h12v26H4zM20 4h12v26H20z" fill="none" stroke="#a8d19a" strokeWidth="2" />
              <path d="M7 10h6M7 15h6M7 20h6M23 10h6M23 15h6M23 20h6" stroke="#c4c4c4" strokeWidth="2" />
            </svg>
            <Caret $c={light} />
          </Cell>
        </Cluster>
      </Row>
      <Row>
        <Cluster>
          <Cell $w={55} disabled aria-label="左对齐"><Lines w={42} rows={[[5, 37], [5, 29], [5, 37], [5, 21], [5, 33]]} /></Cell>
          <Cell $w={55} disabled aria-label="居中"><Lines w={42} rows={[[5, 37], [9, 33], [5, 37], [13, 29], [7, 35]]} /></Cell>
          <Cell $w={55} disabled aria-label="右对齐"><Lines w={42} rows={[[5, 37], [13, 37], [5, 37], [21, 37], [9, 37]]} /></Cell>
          <Cell $w={55} disabled aria-label="两端对齐"><Lines w={42} rows={[[5, 37], [5, 37], [5, 37], [5, 37], [5, 37]]} /></Cell>
          <Cell $w={55} disabled aria-label="分散对齐">
            <svg width="42" height="32" viewBox="0 0 42 32">
              <path d="M2 2v28M40 2v28M5 22h32M5 28h32" stroke="#b3b3b3" strokeWidth="2" />
              <Arrow d="M6 10l8-7v4h14V3l8 7-8 7v-4H14v4z" />
            </svg>
          </Cell>
        </Cluster>
        <Cluster>
          <Cell $w={73} disabled aria-label="文字方向">
            <svg width="36" height="34" viewBox="0 0 36 34">
              <path d="M4 2v26M11 2v26M19 22v6M27 22v6" stroke="#b3b3b3" strokeWidth="2" />
              <path d="M1 27h6l-3 6zM8 27h6l-3 6zM16 27h6l-3 6zM24 27h6l-3 6z" fill="#a3a3a3" />
              <text x="16" y="20" fontFamily="Liberation Serif" fontSize="25" fill="#a3a3a3">A</text>
            </svg>
            <Caret $c={light} />
          </Cell>
          <Cell $w={72} disabled aria-label="文本对齐">
            <svg width="32" height="32" viewBox="0 0 32 32">
              <path d="M1 1h29v30H1z" fill="#eef1f6" stroke="#bcc4d4" />
              <path d="M5 6h18M5 10h20M5 14h12" stroke="#b3b3b3" strokeWidth="2" />
            </svg>
            <Caret $c={light} />
          </Cell>
        </Cluster>
      </Row>
    </GroupBody>
  </Group>
)

const MainRibbon = () => (
  <Ribbon>
    <Group $w={280} $pad={4}>
      <GroupName>幻灯片</GroupName>
      <GroupBody>
        <BigItem icon={<NewSlideIcon />} label="新建幻灯片" w={98} />
        <SmallStack $left={18} $right={18}>
          <SmallButton><LayoutIcon />布局<Caret /></SmallButton>
          <SmallButton><SectionIcon />节<Caret /></SmallButton>
        </SmallStack>
      </GroupBody>
    </Group>
    <FontGroup />
    <ParagraphGroup />
    <Group $w={415} $pad={6}>
      <GroupName>插入</GroupName>
      <GroupBody>
        <BigItem icon={<TextBoxIcon />} label="文本" />
        <BigItem icon={<PictureIcon />} label="图片" />
        <BigItem icon={<ShapesIcon />} label="形状" />
        <BigItem icon={<MediaIcon />} label="媒体" />
      </GroupBody>
    </Group>
    <Group $w={369} $pad={7}>
      <GroupName>格式</GroupName>
      <GroupBody>
        <BigItem icon={<ArrangeIcon />} label="排列" />
        <BigItem icon={<StyleIcon />} label="快速样式" w={112} disabled />
        <SmallStack $left={8} $right={16}>
          <SmallButton disabled><FillIcon />填充<Caret $c={light} /></SmallButton>
          <SmallButton disabled><LineIcon />线条<Caret $c={light} /></SmallButton>
        </SmallStack>
      </GroupBody>
    </Group>
    <Group $w={110} $pad={5}>
      <GroupName>幻灯片放映</GroupName>
      <GroupBody>
        <BigItem icon={<PlayIcon />} label="播放" />
      </GroupBody>
    </Group>
  </Ribbon>
)

const SlidePanel = () => (
  <SidePanel>
    <SideHead>
      <Segments>
        <Segment $on>幻灯片</Segment>
        <Segment>大纲</Segment>
      </Segments>
      <button aria-label="关闭"><CloseIcon /></button>
    </SideHead>
    <SideBody>
      <Thumbs>
        <ThumbSlide n={1} low title="PHP教程">
          <p>智玩PHP工作室</p>
        </ThumbSlide>
        <ThumbSlide n={2} on title="PHP基础语法">
          <ul>
            <li>1、标签　{"<?php ?>"}</li>
            <li>2、包含HTML标签</li>
            <li>3、多个PHP代码</li>
            <li>4、注释</li>
          </ul>
        </ThumbSlide>
        <ThumbSlide n={3} title="PHP环境的搭建" />
        <ThumbSlide n={4} title="数据类型" />
      </Thumbs>
      <SideScroll />
    </SideBody>
  </SidePanel>
)

const SlideEditor = () => (
  <Editor>
    <Stage>
      <Canvas>
        <Slide>
          <Band><Rings width={148} /></Band>
          <SlideText>
            <SlideTitle><span>PHP</span>基础语法</SlideTitle>
            <Points>
              <li><Digit>1</Digit>、标签　<b>{"<?"}<u>php</u>{"  ?>"}</b></li>
              <li><Digit>2</Digit>、包含<b>HTML</b>标签</li>
              <li><Digit>3</Digit>、多个<b>PHP</b>代码</li>
              <li><Digit>4</Digit>、注释</li>
            </Points>
          </SlideText>
        </Slide>
      </Canvas>
      <VScroll>
        <ScrollThumb />
        <Pager>
          <button aria-label="上一张"><DoubleArrow /></button>
          <button aria-label="下一张"><DoubleArrow down /></button>
        </Pager>
      </VScroll>
    </Stage>
    <HSplit><Dot /><Dot /><Dot /></HSplit>
    <Notes>
      <textarea aria-label="备注" placeholder="单击此处添加备注" />
      <VScroll />
    </Notes>
  </Editor>
)

const BottomBar = () => (
  <StatusBar>
    <Views>
      <ViewButton $on aria-label="普通视图">
        <svg width="32" height="26" viewBox="0 0 32 26" fill="none" stroke="#7fb4e6" strokeWidth="2">
          <path d="M2 2h28v22H2zM8 2v22M2 8h6M2 14h6" />
        </svg>
      </ViewButton>
      <ViewButton aria-label="幻灯片浏览">
        <svg width="28" height="26" viewBox="0 0 28 26" fill="none" stroke="#555" strokeWidth="3">
          <path d="M2 2h8v7H2zM18 2h8v7h-8zM2 17h8v7H2zM18 17h8v7h-8z" />
        </svg>
      </ViewButton>
      <ViewButton $last aria-label="幻灯片放映">
        <svg width="32" height="26" viewBox="0 0 32 26" fill="none" stroke="#555" strokeWidth="3">
          <path d="M0 2h32M4 4v20h24V4M9 11h14" />
        </svg>
      </ViewButton>
    </Views>
    <StatusCell $grow $pad={12}>普通视图</StatusCell>
    <StatusCell $w={256} $pad={53}>幻灯片 2 的 4</StatusCell>
    <StatusCell $w={418} $pad={31} $last>
      93%
      <Slider type="range" min="0" max="100" defaultValue="22" aria-label="缩放" />
      <FitButton aria-label="适应窗口">
        <svg width="28" height="26" viewBox="0 0 28 26" fill="#333">
          <path d="M0 0h9L6 3l5 5h6l5-5-3-3h9v8l-3-3-4 5v6l4 5 3-3v8h-9l3-3-5-4h-6l-5 4 3 3H0v-8l3 3 4-5v-6L3 5 0 8z" />
        </svg>
      </FitButton>
    </StatusCell>
  </StatusBar>
)

const RecordWindow = () => (
  <Recorder>
    <RecorderTitle>
      <Lights>
        <Light $c="#dedede" aria-label="关闭" />
        <Light $c="#dedede" aria-label="最小化" />
        <Light $c="#dedede" aria-label="缩放" />
      </Lights>
      Record
    </RecorderTitle>
    <RecorderBody>
      <RecButton aria-label="箭头">
        <svg width="32" height="32" viewBox="0 0 32 32">
          <path d="M1 28L18 11l-5-1L31 1l-8 18-2-5L4 31z" fill="#4e4e4e" />
        </svg>
      </RecButton>
      <RecButton aria-label="矩形">
        <svg width="30" height="24" viewBox="0 0 30 24">
          <rect x="2" y="2" width="26" height="20" rx="3" fill="none" stroke="#555" strokeWidth="4" />
        </svg>
      </RecButton>
      <RecButton $red $w={200}>
        <svg width="40" height="28" viewBox="0 0 40 28" fill="#fff">
          <path d="M0 2q0-2 2-2h24q2 0 2 2v7L40 0v28L28 19v7q0 2-2 2H2q-2 0-2-2z" />
        </svg>
        Record
      </RecButton>
      <RecButton $w={52} aria-label="暂停">
        <svg width="24" height="28" viewBox="0 0 24 28"><path d="M1 0h8v28H1zM15 0h8v28h-8z" fill="#555" /></svg>
      </RecButton>
    </RecorderBody>
  </Recorder>
)

const ImeBar = () => (
  <InputBar>
    <button aria-label="输入法"><BearIcon /></button>
    <button>A</button>
    <button aria-label="半角">
      <svg width="28" height="28" viewBox="0 0 28 28" fill="#fbdbe2"><path d="M19 1q14 16-2 25-9 3-16-5 20 2 18-20z" /></svg>
    </button>
    <button aria-label="标点">
      <svg width="24" height="24" viewBox="0 0 24 24" fill="#fbdbe2"><circle cx="5" cy="5" r="3" /><path d="M17 13q6 2 0 10l-1-1 2-5z" /></svg>
    </button>
    <button aria-label="设置"><Gear size={32} color="#fbdbe2" /></button>
  </InputBar>
)

function App() {
  return (
    <Desktop>
      <GlobalStyle />
      <TopBar />
      <Window>
        <Chrome>
          <TitleBar>
            <Lights>
              <Light $c="radial-gradient(#5b0d12 0 4px, #ef4d55 5px)" aria-label="关闭" />
              <Light $c="#f6b83f" aria-label="最小化" />
              <Light $c="#42d951" aria-label="缩放" />
            </Lights>
            <FileName><FileIcon />class1.pptx</FileName>
          </TitleBar>
          <MainToolBar />
        </Chrome>
        <Tabs>
          <Tab $on><HomeIcon />开始</Tab>
          {tabs.map(name => <Tab key={name} $bold={name === "SmartArt"}>{name}</Tab>)}
          <TabTools>
            <button aria-label="折叠功能区">
              <svg width="20" height="14" viewBox="0 0 22 14" fill="none" stroke="#6b615d" strokeWidth="4"><path d="M2 12l9-9 9 9" /></svg>
            </button>
            <GearMenu aria-label="功能区选项">
              <Gear size={28} color="#6b615d" />
              <Caret $c="#6b615d" />
            </GearMenu>
          </TabTools>
        </Tabs>
        <MainRibbon />
        <Body>
          <SlidePanel />
          <VSplit><Dot /><Dot /><Dot /></VSplit>
          <SlideEditor />
        </Body>
        <BottomBar />
      </Window>
      <RecordWindow />
      <ImeBar />
      <TextCursor>
        <svg width="18" height="34" viewBox="0 0 18 34" fill="none">
          <path d="M2 2q6 0 7 4 1-4 7-4M9 5v24M2 32q6 0 7-4 1 4 7 4M6 18h6" stroke="#fff" strokeWidth="4" />
          <path d="M2 2q6 0 7 4 1-4 7-4M9 5v24M2 32q6 0 7-4 1 4 7 4M6 18h6" stroke="#222" strokeWidth="2" />
        </svg>
      </TextCursor>
    </Desktop>
  )
}

export default App
